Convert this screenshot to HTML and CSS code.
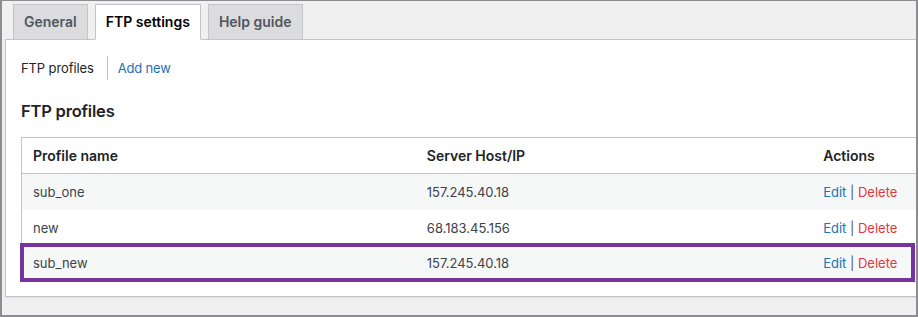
FILE: index.html
```html
<!DOCTYPE html>
<html>
<head>
<meta charset="utf-8">
<link rel="stylesheet" href="styles.css">
</head>
<body>
<div class="frame">
  <div class="tabs">
    <span class="tab">General</span>
    <span class="tab active">FTP settings</span>
    <span class="tab">Help guide</span>
  </div>
  <div class="panel">
    <div class="subnav">
      <span class="sub-current">FTP profiles</span>
      <a class="sub-link" href="#">Add new</a>
    </div>
    <h2 class="title">FTP profiles</h2>
    <table class="profiles">
      <colgroup>
        <col class="c1"><col class="c2"><col class="c3">
      </colgroup>
      <thead>
        <tr><th>Profile name</th><th>Server Host/IP</th><th>Actions</th></tr>
      </thead>
      <tbody>
        <tr class="alt"><td>sub_one</td><td>157.245.40.18</td><td><a class="edit" href="#">Edit</a> <span class="sep">|</span> <a class="del" href="#">Delete</a></td></tr>
        <tr><td>new</td><td>68.183.45.156</td><td><a class="edit" href="#">Edit</a> <span class="sep">|</span> <a class="del" href="#">Delete</a></td></tr>
        <tr class="alt"><td>sub_new</td><td>157.245.40.18</td><td><a class="edit" href="#">Edit</a> <span class="sep">|</span> <a class="del" href="#">Delete</a></td></tr>
      </tbody>
    </table>
  </div>
  <div class="highlight"></div>
</div>
</body>
</html>
```

FILE: styles.css
```css
* { box-sizing: border-box; }
html, body { margin: 0; padding: 0; background: #ffffff; }
body {
  font-family: Inter, "Noto Sans", "Liberation Sans", sans-serif;
  color: #2c3338;
}
.frame {
  position: relative;
  width: 918px;
  height: 317px;
  overflow: hidden;
  background: #f0f0f1;
  border: 1px solid #8c8c91;
  border-left-width: 2px;
  border-right-width: 2px;
  border-bottom-width: 2px;
}
.tabs {
  display: flex;
  gap: 7px;
  padding: 3px 0 0 11px;
  position: relative;
  z-index: 2;
  margin-bottom: -1px;
}
.tab {
  display: block;
  padding: 5px 10px;
  font-size: 14px;
  line-height: 24px;
  font-weight: 600;
  color: #50575e;
  background: #dcdcde;
  border: 1px solid #c3c4c7;
}
.tab.active {
  background: #ffffff;
  color: #000000;
  border-bottom-color: #ffffff;
}
.panel {
  margin-left: 3px;
  margin-right: -40px;
  background: #ffffff;
  border: 1px solid #c3c4c7;
  box-shadow: 0 1px 1px rgba(0,0,0,0.06);
  padding: 16px 15px 14px;
}
.subnav {
  display: flex;
  align-items: center;
  font-size: 13px;
  line-height: 24px;
}
.sub-current {
  color: #1d2327;
  padding-right: 13px;
  border-right: 1px solid #c3c4c7;
  letter-spacing: -0.1px;
}
.sub-link {
  color: #2271b1;
  text-decoration: none;
  padding-left: 10px;
  letter-spacing: -0.2px;
}
.title {
  margin: 20px 0 15px;
  font-size: 16.5px;
  letter-spacing: -0.2px;
  line-height: 22px;
  font-weight: 600;
  color: #1d2327;
}
.profiles {
  table-layout: fixed;
  width: 1188px;
  border-collapse: collapse;
  border: 1px solid #c3c4c7;
  font-size: 13px;
}
.profiles col.c1 { width: 394px; }
.profiles col.c2 { width: 396px; }
.profiles col.c3 { width: 396px; }
.profiles th {
  text-align: left;
  font-weight: 600;
  font-size: 14px;
  color: #1d2327;
  padding: 8px 11px;
  line-height: 19px;
  border-bottom: 1px solid #c3c4c7;
}
.profiles td {
  padding: 9px 11px 7px;
  line-height: 19.5px;
  color: #3c434a;
}
.profiles tr.alt td { background: #f6f7f7; }
.edit { color: #2271b1; text-decoration: none; }
.del { color: #e5383d; text-decoration: none; }
.sep { color: #50575e; }
.highlight {
  position: absolute;
  left: 18px;
  top: 242px;
  width: 895px;
  height: 39px;
  border: 4px solid #74349b;
  z-index: 3;
}
```
